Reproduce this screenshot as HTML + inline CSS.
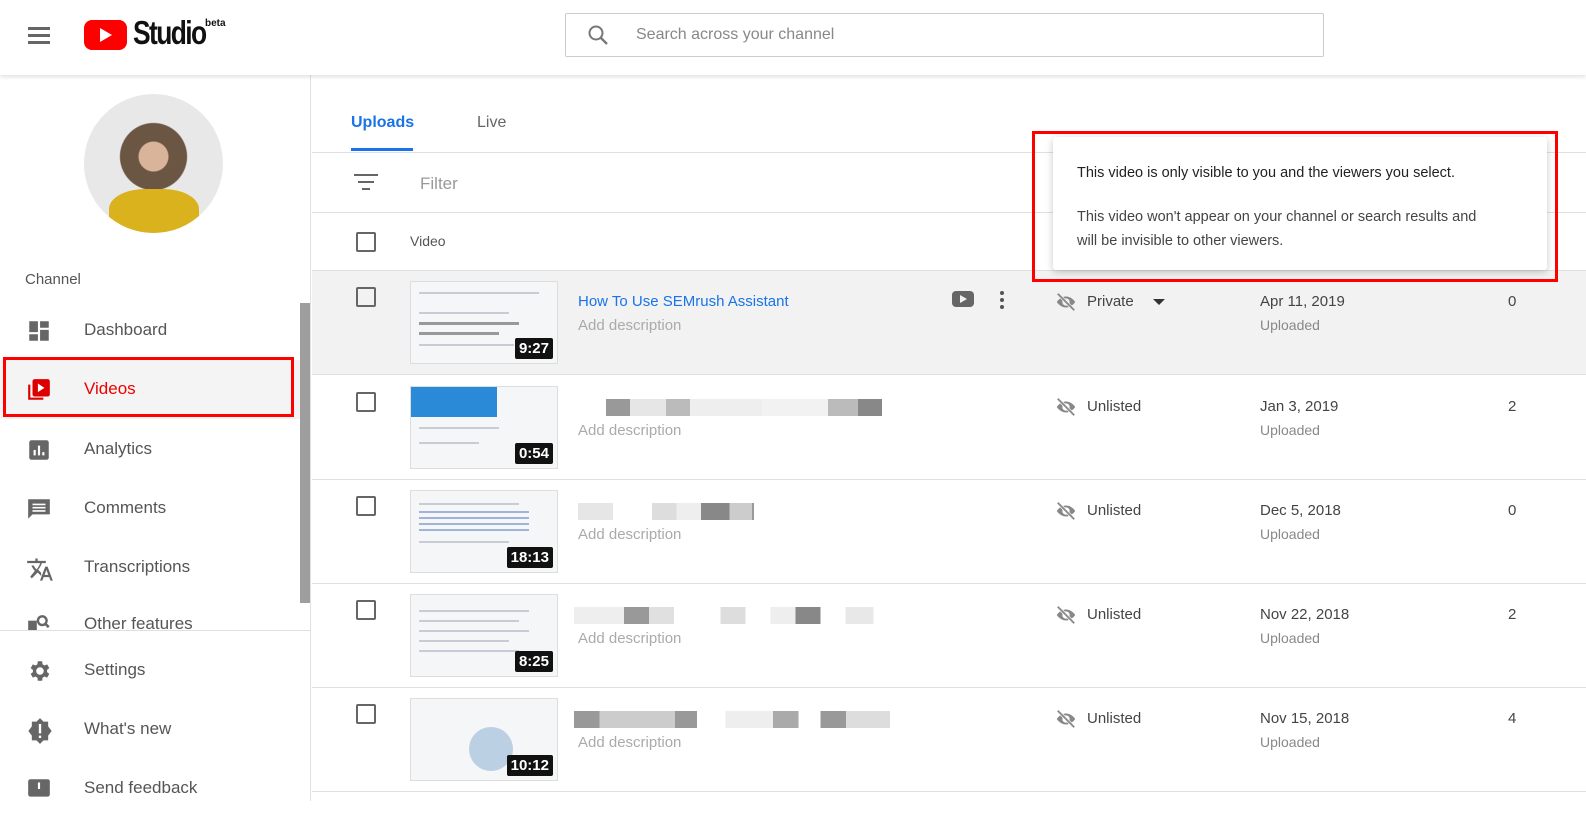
<!DOCTYPE html>
<html><head><style>
*{box-sizing:border-box;margin:0;padding:0}
body{width:1586px;height:801px;overflow:hidden;background:#fff;font-family:"Liberation Sans",Roboto,sans-serif;position:relative;color:#333}
.a{position:absolute}
.hdr{left:0;top:0;width:1586px;height:75px;background:#fff;box-shadow:0 2px 4px rgba(0,0,0,.12);z-index:5}
.side{left:0;top:75px;width:311px;height:726px;border-right:1px solid #e0e0e0}
.nav{position:absolute;left:0;width:300px;height:59px;font-size:17px;color:#555}
.nav span{position:absolute;left:84px;top:19px}
.nav svg{position:absolute;left:26px;top:17px}
.row{left:312px;width:1274px;height:104px;border-bottom:1px solid #e0e0e0}
.cb{position:absolute;left:44px;top:16px;width:20px;height:20px;border:2px solid #666;border-radius:2px}
.th{position:absolute;left:98px;top:10px;width:148px;height:83px;background:#f4f6f8;border:1px solid #ddd;overflow:hidden}
.th i{position:absolute;left:8px;height:2px;background:#c8ccd4;display:block}
.dur{position:absolute;right:4px;bottom:4px;background:#111;color:#fff;font-size:15px;padding:2px 4px;border-radius:2px;font-weight:bold}
.ttl{position:absolute;left:266px;top:22px;font-size:15px;color:#1a73e8}
.desc{position:absolute;left:266px;top:46px;font-size:15px;color:#aaa}
.vis{position:absolute;left:742px;top:22px;font-size:15px;color:#444}
.vis svg{position:absolute;left:0;top:-2px}
.vis span{position:absolute;left:33px;top:0;white-space:nowrap}
.dt{position:absolute;left:948px;top:22px;font-size:15px;color:#444;white-space:nowrap}
.up{position:absolute;left:948px;top:46px;font-size:14px;color:#888}
.ct{position:absolute;left:1196px;top:22px;font-size:15px;color:#444}
.bl{position:absolute;top:23px;height:17px}
</style></head><body>
<div class="a hdr">
 <div class="a" style="left:28px;top:27px;width:22px;height:3px;background:#666;box-shadow:0 7px 0 #666,0 14px 0 #666"></div>
 <div class="a" style="left:84px;top:20px;width:43px;height:30px;background:#f00;border-radius:8px"></div>
 <div class="a" style="left:100px;top:28px;width:0;height:0;border-left:12px solid #fff;border-top:7px solid transparent;border-bottom:7px solid transparent"></div>
 <div class="a" style="left:133px;top:14px;font-size:33px;font-weight:bold;letter-spacing:-2px;transform:scaleX(.8);transform-origin:left;color:#111">Studio</div>
 <div class="a" style="left:205px;top:18px;font-size:10px;font-weight:bold;color:#111">beta</div>
 <div class="a" style="left:565px;top:13px;width:759px;height:44px;border:1px solid #ccc;border-radius:2px">
  <svg class="a" style="left:20px;top:9px" width="24" height="24" viewBox="0 0 24 24"><circle cx="10" cy="10" r="6.5" fill="none" stroke="#777" stroke-width="2"/><path d="M15 15l6 6" stroke="#777" stroke-width="2.3"/></svg>
  <div class="a" style="left:70px;top:12px;font-size:16px;color:#888">Search across your channel</div>
 </div>
</div>
<div class="a side">
 <div class="a" style="left:84px;top:19px;width:139px;height:139px;border-radius:50%;background:radial-gradient(circle at 50% 45%,#d9b49a 0 14%,#6b5543 15% 32%,#e8e8e8 33%);overflow:hidden"><div class="a" style="left:25px;top:95px;width:90px;height:50px;background:#d9b21e;border-radius:40% 40% 0 0"></div></div>
 <div class="a" style="left:25px;top:196px;font-size:15px;color:#555">Channel</div>
 <div class="a" style="left:300px;top:228px;width:10px;height:300px;background:#9e9e9e"></div>
 <div class="nav" style="top:226px"><svg width="26" height="26" viewBox="0 0 24 24"><path d="M3 3h8v10H3zM13 3h8v6h-8zM3 15h8v6H3zM13 11h8v10h-8z" fill="#666"/></svg><span>Dashboard</span></div>
 <div class="nav" style="top:285px;background:#f4f4f4;color:#e00"><svg width="26" height="26" viewBox="0 0 24 24"><path d="M2 7v14h14v-2H4V7z" fill="#d00"/><rect x="6" y="2" width="16" height="16" rx="2" fill="#d00"/><path d="M11 6v8l6-4z" fill="#fff"/></svg><span>Videos</span></div>
 <div class="a" style="left:3px;top:282px;width:291px;height:60px;border:3px solid #f00"></div>
 <div class="nav" style="top:345px"><svg width="26" height="26" viewBox="0 0 24 24"><rect x="3" y="3" width="18" height="18" rx="2" fill="#666"/><path d="M7 17v-5h2v5zM11 17V8h2v9zM15 17v-3h2v3z" fill="#fff"/></svg><span>Analytics</span></div>
 <div class="nav" style="top:404px"><svg width="26" height="26" viewBox="0 0 24 24"><path d="M2 3h20v14H6l-4 4z" fill="#666"/><path d="M6 7h12v1.5H6zM6 10h12v1.5H6zM6 13h12v1.5H6z" fill="#fff"/></svg><span>Comments</span></div>
 <div class="nav" style="top:463px"><svg width="28" height="28" viewBox="0 0 24 24"><path d="M12.9 15.1l-2.5-2.5c1.5-1.7 2.6-3.6 3.2-5.6H17V5h-7V3H8v2H1v2h11.2c-.7 1.9-1.7 3.8-3.2 5.4-1-1.1-1.8-2.2-2.4-3.4h-2c.7 1.6 1.7 3.2 3 4.6L3.6 18.6 5 20l5-5 3.1 3.1zM18.5 10h-2L12 22h2l1.1-3h4.8l1.1 3h2zm-2.6 7l1.6-4.3 1.6 4.3z" fill="#666"/></svg><span>Transcriptions</span></div>
 <div class="a" style="left:0;top:520px;width:310px;height:35px;overflow:hidden">
  <div class="nav" style="top:0"><svg width="26" height="26" viewBox="0 0 24 24"><path d="M2 8h8v10H2z" fill="#666"/><circle cx="15" cy="8" r="4" fill="none" stroke="#666" stroke-width="2.2"/><path d="M18 11l3 3" stroke="#666" stroke-width="2.4"/></svg><span>Other features</span></div>
 </div>
 <div class="a" style="left:0;top:555px;width:310px;height:1px;background:#e0e0e0"></div>
 <div class="nav" style="top:566px"><svg width="26" height="26" viewBox="0 0 24 24"><path d="M19.4 13a7.5 7.5 0 000-2l2.1-1.6-2-3.5-2.5 1a7 7 0 00-1.7-1L14.9 3h-4l-.4 2.9a7 7 0 00-1.7 1l-2.5-1-2 3.5L6.4 11a7.5 7.5 0 000 2l-2.1 1.6 2 3.5 2.5-1a7 7 0 001.7 1l.4 2.9h4l.4-2.9a7 7 0 001.7-1l2.5 1 2-3.5zM12.9 15.5a3.5 3.5 0 110-7 3.5 3.5 0 010 7z" fill="#666"/></svg><span>Settings</span></div>
 <div class="nav" style="top:625px"><svg width="28" height="28" viewBox="0 0 24 24"><path d="M12 1l3 3h4v4l3 4-3 4v4h-4l-3 3-3-3H5v-4l-3-4 3-4V4h4z" fill="#666"/><path d="M11 6h2v8h-2zM11 16h2v2h-2z" fill="#fff"/></svg><span>What's new</span></div>
 <div class="nav" style="top:684px"><svg width="26" height="26" viewBox="0 0 24 24"><rect x="2" y="3" width="20" height="16" rx="2" fill="#666"/><path d="M11 6h2v6h-2z" fill="#fff"/></svg><span>Send feedback</span></div>
</div>
<div class="a" style="left:351px;top:114px;font-size:16px;color:#1a73e8;font-weight:bold">Uploads</div>
<div class="a" style="left:351px;top:148px;width:62px;height:3px;background:#1a73e8"></div>
<div class="a" style="left:477px;top:114px;font-size:16px;color:#666">Live</div>
<div class="a" style="left:312px;top:152px;width:1274px;height:1px;background:#e0e0e0"></div>
<div class="a" style="left:354px;top:174px;width:24px;height:2px;background:#666"></div>
<div class="a" style="left:358px;top:181px;width:16px;height:2px;background:#666"></div>
<div class="a" style="left:362px;top:188px;width:8px;height:2px;background:#666"></div>
<div class="a" style="left:420px;top:174px;font-size:17px;color:#999">Filter</div>
<div class="a" style="left:312px;top:212px;width:1274px;height:1px;background:#e0e0e0"></div>
<div class="a" style="left:356px;top:232px;width:20px;height:20px;border:2px solid #666;border-radius:2px"></div>
<div class="a" style="left:410px;top:233px;font-size:14px;color:#555">Video</div>
<div class="a" style="left:312px;top:270px;width:1274px;height:1px;background:#e0e0e0"></div>

<div class="a row" style="top:271px;background:#f2f2f2">
 <div class="cb"></div>
 <div class="th"><i style="top:10px;width:120px"></i><i style="top:30px;width:90px"></i><i style="top:40px;width:100px;height:3px;background:#999"></i><i style="top:50px;width:80px;height:3px;background:#999"></i><i style="top:62px;width:95px"></i><div class="dur">9:27</div></div>
 <div class="ttl">How To Use SEMrush Assistant</div><div class="desc">Add description</div>
 <div class="a" style="left:640px;top:20px;width:22px;height:16px;background:#666;border-radius:4px"></div>
 <div class="a" style="left:648px;top:24px;width:0;height:0;border-left:7px solid #f2f2f2;border-top:4px solid transparent;border-bottom:4px solid transparent"></div>
 <div class="a" style="left:688px;top:20px;width:4px;height:4px;background:#555;border-radius:2px;box-shadow:0 7px 0 #555,0 14px 0 #555"></div>
 <div class="vis"><svg width="24" height="22" viewBox="0 0 24 24"><path d="M12 6c-5 0-9 4-10 6 1 2 5 6 10 6s9-4 10-6c-1-2-5-6-10-6zm0 10a4 4 0 110-8 4 4 0 010 8z" fill="#888"/><path d="M3 3l18 18" stroke="#f2f2f2" stroke-width="3.5"/><path d="M3 3l18 18" stroke="#888" stroke-width="2"/></svg><span>Private</span></div>
 <div class="a" style="left:841px;top:28px;border-top:6px solid #333;border-left:6px solid transparent;border-right:6px solid transparent"></div>
 <div class="dt">Apr 11, 2019</div><div class="up">Uploaded</div><div class="ct">0</div>
</div>
<div class="a row" style="top:376px">
 <div class="cb"></div>
 <div class="th"><div class="a" style="left:0;top:0;width:86px;height:30px;background:#2a8ad8"></div><i style="top:40px;width:80px"></i><i style="top:55px;width:60px"></i><div class="dur">0:54</div></div>
 <div class="bl" style="left:276px;width:300px;background:linear-gradient(90deg,#fff 0 6%,#999 6% 14%,#e6e6e6 14% 26%,#bbb 26% 34%,#eee 34% 58%,#f2f2f2 58% 80%,#bbb 80% 90%,#888 90% 98%,#fff 98%)"></div>
 <div class="desc">Add description</div>
 <div class="vis"><svg width="24" height="22" viewBox="0 0 24 24"><path d="M12 6c-5 0-9 4-10 6 1 2 5 6 10 6s9-4 10-6c-1-2-5-6-10-6zm0 10a4 4 0 110-8 4 4 0 010 8z" fill="#888"/><path d="M3 3l18 18" stroke="#fff" stroke-width="3.5"/><path d="M3 3l18 18" stroke="#888" stroke-width="2"/></svg><span>Unlisted</span></div>
 <div class="dt">Jan 3, 2019</div><div class="up">Uploaded</div><div class="ct">2</div>
</div>
<div class="a row" style="top:480px">
 <div class="cb"></div>
 <div class="th"><i style="top:12px;width:100px"></i><i style="top:20px;width:110px;background:#9fb4d6"></i><i style="top:26px;width:110px;background:#9fb4d6"></i><i style="top:32px;width:110px;background:#9fb4d6"></i><i style="top:38px;width:110px;background:#9fb4d6"></i><i style="top:50px;width:90px"></i><div class="dur">18:13</div></div>
 <div class="bl" style="left:266px;width:176px;background:linear-gradient(90deg,#e6e6e6 0 20%,#fff 20% 42%,#ddd 42% 56%,#eee 56% 70%,#888 70% 86%,#ccc 86% 99%,#999 99%)"></div>
 <div class="desc">Add description</div>
 <div class="vis"><svg width="24" height="22" viewBox="0 0 24 24"><path d="M12 6c-5 0-9 4-10 6 1 2 5 6 10 6s9-4 10-6c-1-2-5-6-10-6zm0 10a4 4 0 110-8 4 4 0 010 8z" fill="#888"/><path d="M3 3l18 18" stroke="#fff" stroke-width="3.5"/><path d="M3 3l18 18" stroke="#888" stroke-width="2"/></svg><span>Unlisted</span></div>
 <div class="dt">Dec 5, 2018</div><div class="up">Uploaded</div><div class="ct">0</div>
</div>
<div class="a row" style="top:584px">
 <div class="cb"></div>
 <div class="th"><i style="top:15px;width:110px"></i><i style="top:25px;width:100px"></i><i style="top:35px;width:110px"></i><i style="top:45px;width:90px"></i><i style="top:55px;width:100px"></i><div class="dur">8:25</div></div>
 <div class="bl" style="left:262px;width:312px;background:linear-gradient(90deg,#eee 0 16%,#999 16% 24%,#e0e0e0 24% 32%,#fff 32% 47%,#ddd 47% 55%,#fff 55% 63%,#eee 63% 71%,#888 71% 79%,#fff 79% 87%,#e8e8e8 87% 96%,#fff 96%)"></div>
 <div class="desc">Add description</div>
 <div class="vis"><svg width="24" height="22" viewBox="0 0 24 24"><path d="M12 6c-5 0-9 4-10 6 1 2 5 6 10 6s9-4 10-6c-1-2-5-6-10-6zm0 10a4 4 0 110-8 4 4 0 010 8z" fill="#888"/><path d="M3 3l18 18" stroke="#fff" stroke-width="3.5"/><path d="M3 3l18 18" stroke="#888" stroke-width="2"/></svg><span>Unlisted</span></div>
 <div class="dt">Nov 22, 2018</div><div class="up">Uploaded</div><div class="ct">2</div>
</div>
<div class="a row" style="top:688px">
 <div class="cb"></div>
 <div class="th"><div class="a" style="left:58px;top:28px;width:44px;height:44px;border-radius:50%;background:#bcd0e4"></div><div class="dur">10:12</div></div>
 <div class="bl" style="left:262px;width:316px;background:linear-gradient(90deg,#999 0 8%,#ccc 8% 32%,#999 32% 39%,#fff 39% 48%,#eee 48% 63%,#aaa 63% 71%,#fff 71% 78%,#999 78% 86%,#ddd 86% 100%)"></div>
 <div class="desc">Add description</div>
 <div class="vis"><svg width="24" height="22" viewBox="0 0 24 24"><path d="M12 6c-5 0-9 4-10 6 1 2 5 6 10 6s9-4 10-6c-1-2-5-6-10-6zm0 10a4 4 0 110-8 4 4 0 010 8z" fill="#888"/><path d="M3 3l18 18" stroke="#fff" stroke-width="3.5"/><path d="M3 3l18 18" stroke="#888" stroke-width="2"/></svg><span>Unlisted</span></div>
 <div class="dt">Nov 15, 2018</div><div class="up">Uploaded</div><div class="ct">4</div>
</div>

<div class="a" style="left:1053px;top:137px;width:494px;height:133px;background:#fff;border-radius:3px;box-shadow:0 2px 8px rgba(0,0,0,.22);z-index:6">
 <div class="a" style="left:24px;top:28px;font-size:14.5px;color:#222">This video is only visible to you and the viewers you select.</div>
 <div class="a" style="left:24px;top:68px;width:420px;font-size:14.5px;line-height:24px;color:#444">This video won't appear on your channel or search results and will be invisible to other viewers.</div>
</div>
<div class="a" style="left:1032px;top:131px;width:526px;height:151px;border:3px solid #f00;z-index:7"></div>
</body></html>
